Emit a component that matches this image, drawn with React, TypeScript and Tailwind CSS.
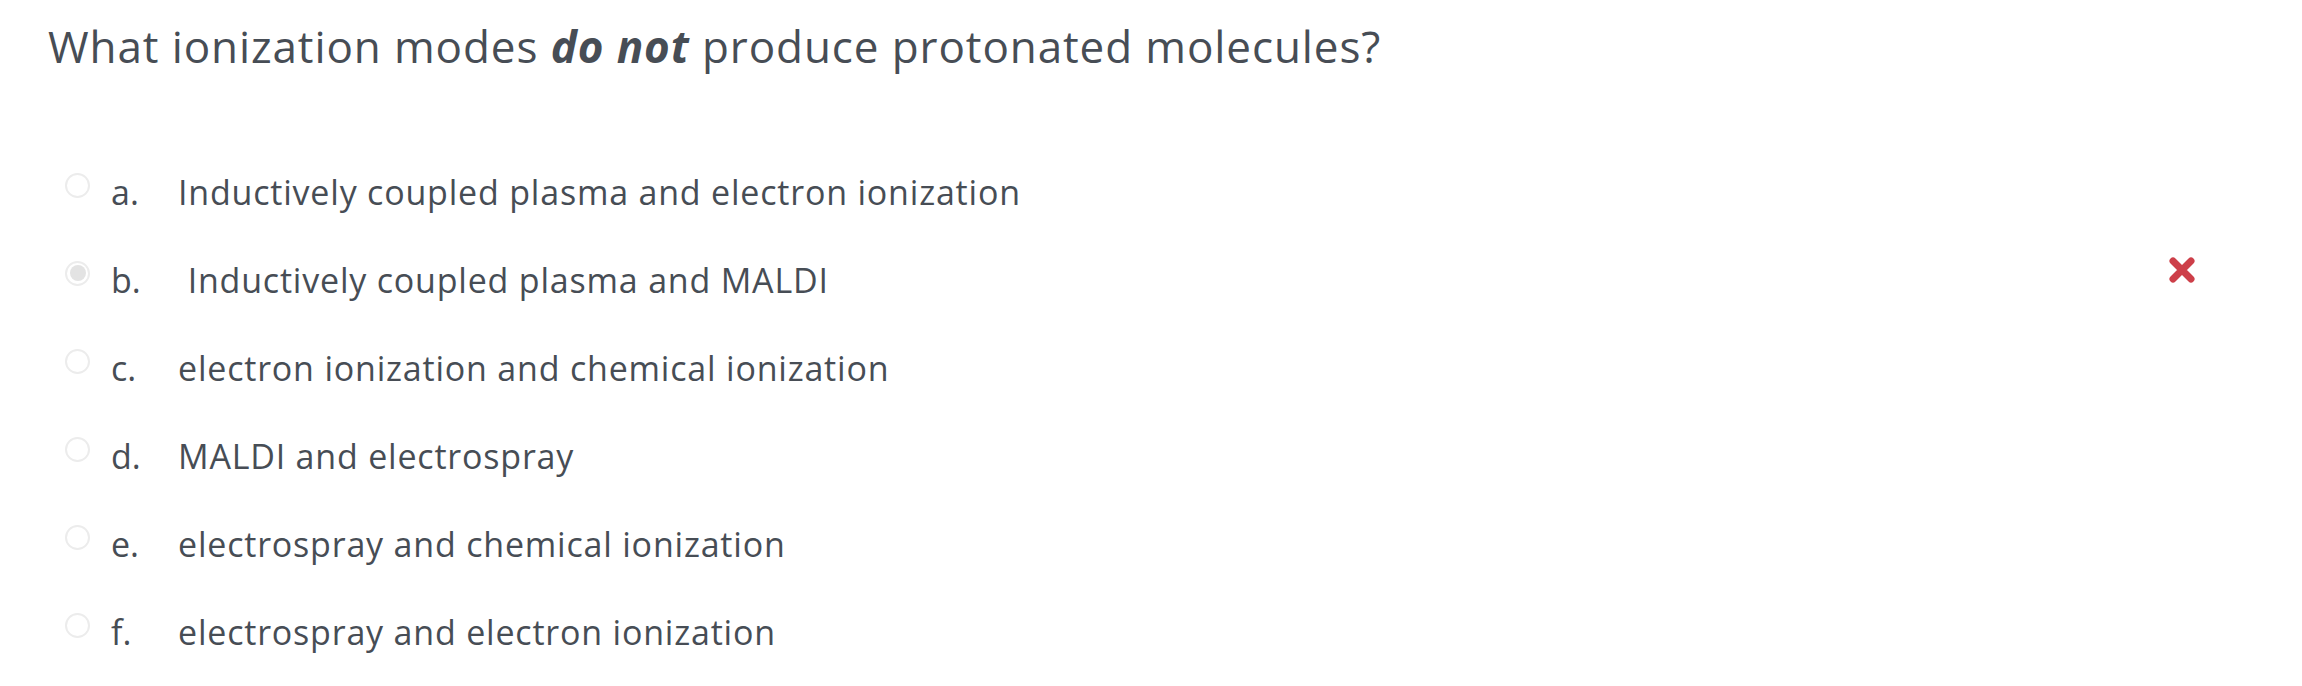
import React from "react";

const options = [
  { l: "a.", t: "Inductively coupled plasma and electron ionization", state: "none" },
  { l: "b.", t: "\u00a0Inductively coupled plasma and MALDI", state: "wrong" },
  { l: "c.", t: "electron ionization and chemical ionization", state: "none" },
  { l: "d.", t: "MALDI and electrospray", state: "none" },
  { l: "e.", t: "electrospray and chemical ionization", state: "none" },
  { l: "f.", t: "electrospray and electron ionization", state: "none" },
];

function Radio({ checked }: { checked: boolean }) {
  return (
    <div className="w-[25px] h-[25px] rounded-full border-2 border-[#ececec] bg-white flex items-center justify-center shrink-0">
      {checked && <div className="w-[16px] h-[16px] rounded-full bg-[#e3e3e3]" />}
    </div>
  );
}

function XMark() {
  return (
    <svg width="26" height="26" viewBox="0 0 26 26">
      <path d="M4 4 L22 22 M22 4 L4 22" stroke="#cd3f49" strokeWidth="7" strokeLinecap="round" />
    </svg>
  );
}

export default function App() {
  return (
    <div
      className="w-[2302px] h-[686px] bg-white text-[#474d55] overflow-hidden"
      style={{ fontFamily: "'Open Sans', 'Liberation Sans', sans-serif" }}
    >
      <div className="pl-[48px] pt-[16px] h-[148px]">
        <h1 className="text-[44px] leading-[60px] font-normal tracking-[0.9px]">
          What ionization modes <em className="font-bold">do not</em> produce protonated molecules?
        </h1>
      </div>
      <div className="flex flex-col">
        {options.map((o) => (
          <div key={o.l} className="flex items-center h-[88px] pl-[65px] pr-[107px]">
            <div className="-translate-y-[7px]">
              <Radio checked={o.state === "wrong"} />
            </div>
            <div className="w-[67px] ml-[21px] text-[34px]">{o.l}</div>
            <div className="text-[34px] flex-1 tracking-[0.8px]">{o.t}</div>
            {o.state === "wrong" && (
              <div className="-translate-y-[10px]">
                <XMark />
              </div>
            )}
          </div>
        ))}
      </div>
    </div>
  );
}
